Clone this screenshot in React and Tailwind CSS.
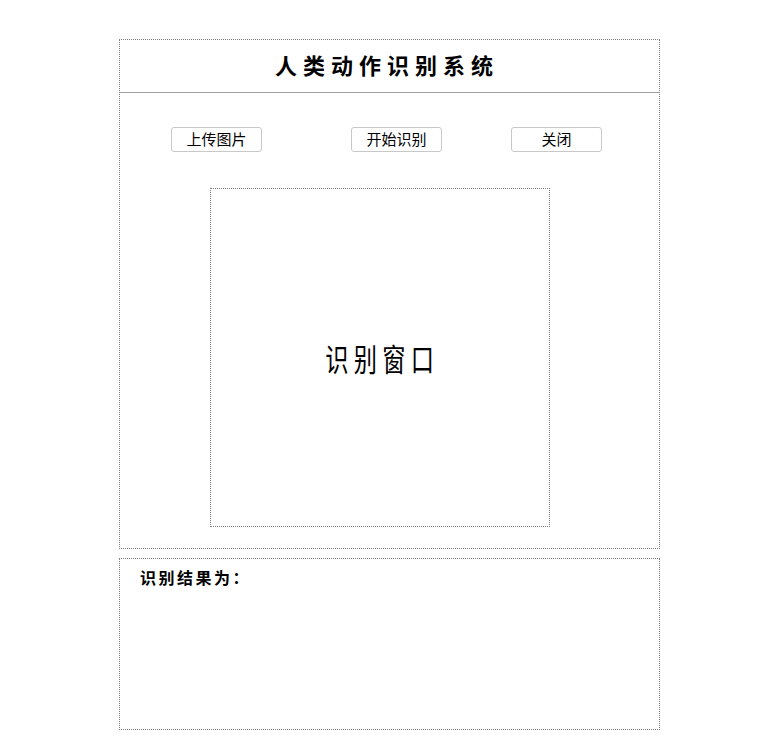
export default function App() {
  const btn =
    "h-[25px] w-[91px] rounded-[3px] border border-[#c8c8c8] bg-white text-[15px] leading-none text-black";
  return (
    <div
      className="min-h-[756px] w-[757px] bg-white pt-[39px]"
      style={{ fontFamily: '"Noto Sans CJK SC", "Noto Sans", sans-serif' }}
    >
      <div className="ml-[119px] w-[541px]">
        <div className="h-[510px] border border-dotted border-[#808080]">
          <div className="flex h-[53px] items-center justify-center border-b border-[#a0a0a0] pb-[3px]">
            <span className="pr-[5px] text-[22px] font-bold tracking-[6px] text-black">
              人类动作识别系统
            </span>
          </div>
          <div className="flex pt-[34px]">
            <button className={`${btn} ml-[51px] pb-[2px]`}>上传图片</button>
            <button className={`${btn} ml-[89px] pb-[2px]`}>开始识别</button>
            <button className={`${btn} ml-[69px] pb-[2px]`}>关闭</button>
          </div>
          <div className="ml-[90px] mt-[36px] flex h-[339px] w-[340px] items-center justify-center border border-dotted border-[#808080]">
            <span className="scale-x-75 pl-[6px] text-[31px] leading-none tracking-[7px] text-black">
              识别窗口
            </span>
          </div>
        </div>
        <div className="mt-[9px] h-[172px] border border-dotted border-[#808080] pl-[20px] pt-[6px]">
          <span className="text-[16px] font-bold tracking-[2.5px] text-black">识别结果为：</span>
        </div>
      </div>
    </div>
  );
}
